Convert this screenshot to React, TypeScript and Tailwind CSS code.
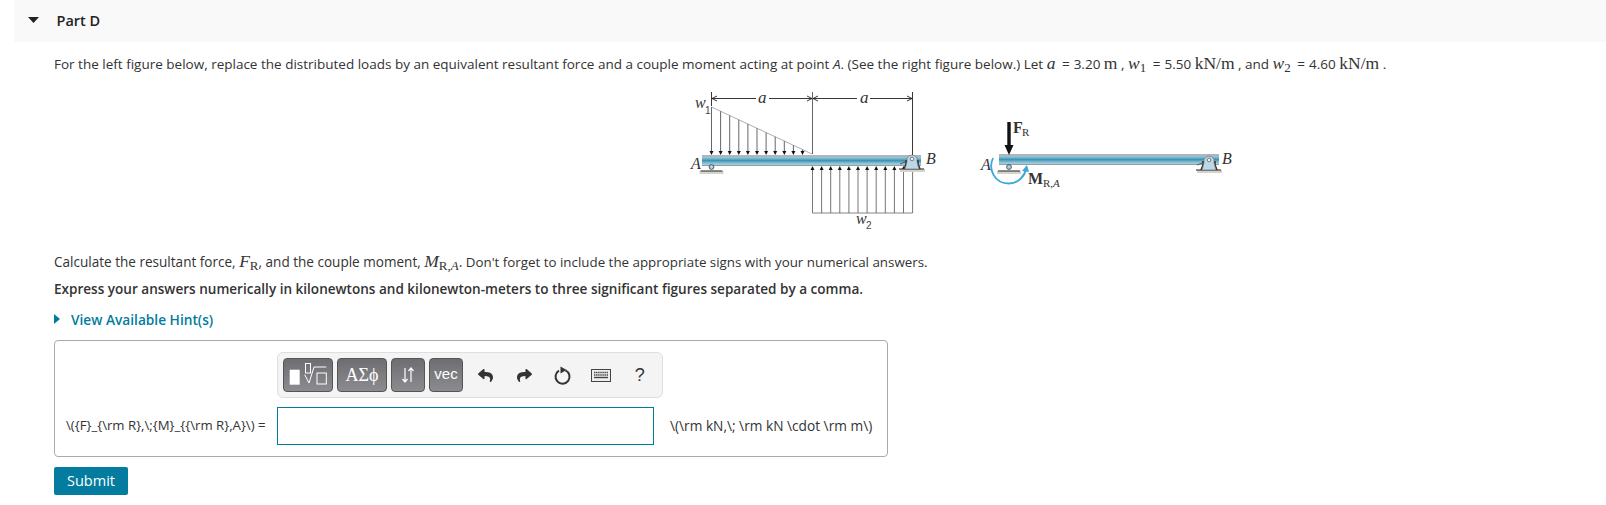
import { FaReply, FaShare } from 'react-icons/fa';

const serif = '"Liberation Serif", serif';

function M({ children }: { children: React.ReactNode }) {
  return <span className="font-['Liberation_Serif',serif] italic text-[17.5px] text-[#333]">{children}</span>;
}

function R({ children }: { children: React.ReactNode }) {
  return <span className="font-['Liberation_Serif',serif] text-[17.5px] text-[#333]">{children}</span>;
}

function Eq({ children }: { children: React.ReactNode }) {
  return <span className="ml-[3px] mr-[0.5px]">{children}</span>;
}

function Sub({ children }: { children: React.ReactNode }) {
  return (
    <sub className="font-['Liberation_Serif',serif] text-[13px] text-[#333] not-italic leading-none">
      {children}
    </sub>
  );
}

function Support({ x, y }: { x: number; y: number }) {
  // pin support at the right end of a beam
  return (
    <g>
      <rect x={x - 12} y={y + 10} width={25} height={3} fill="#d4d4ca" />
      <line x1={x - 13} y1={y + 10} x2={x + 12} y2={y + 10} stroke="#333" strokeWidth="1.1" />
      <path d={`M${x - 12} ${y + 5} L${x - 7} ${y + 3}`} stroke="#444" strokeWidth="0.8" fill="none" />
      <path d={`M${x - 8} ${y + 10} L${x - 6} ${y + 5} L${x - 6} ${y + 1}`} stroke="#333" strokeWidth="1.6" fill="none" />
      <path d={`M${x + 8} ${y + 10} L${x + 6} ${y + 5} L${x + 6} ${y + 1}`} stroke="#333" strokeWidth="1.6" fill="none" />
      <path
        d={`M${x - 7} ${y + 10} L${x - 5} ${y + 3} L${x - 5} ${y - 1} Q${x} ${y - 7} ${x + 5} ${y - 1} L${x + 5} ${y + 3} L${x + 7} ${y + 10} Z`}
        fill="#bcd7e6"
        stroke="#666"
        strokeWidth="0.6"
      />
      <circle cx={x} cy={y} r="1.8" fill="#eef3f6" stroke="#555" strokeWidth="0.7" />
    </g>
  );
}

function Roller({ x, y }: { x: number; y: number }) {
  return (
    <g>
      <rect x={x - 12} y={y + 4} width={24} height={3} fill="#d4d4ca" />
      <line x1={x - 11} y1={y + 4} x2={x + 11} y2={y + 4} stroke="#333" strokeWidth="1.1" />
      <circle cx={x} cy={y} r="2.4" fill="#a9d4e6" stroke="#333" strokeWidth="0.8" />
    </g>
  );
}

function Beam({ x, y, w, id }: { x: number; y: number; w: number; id: string }) {
  return (
    <g>
      <defs>
        <linearGradient id={id} x1="0" y1="0" x2="0" y2="1">
          <stop offset="0" stopColor="#b4b4b4" />
          <stop offset="0.16" stopColor="#a9b9c0" />
          <stop offset="0.25" stopColor="#8cc4da" />
          <stop offset="0.5" stopColor="#3f94b5" />
          <stop offset="0.85" stopColor="#a5d0e0" />
          <stop offset="1" stopColor="#8a8a8a" />
        </linearGradient>
      </defs>
      <rect x={x} y={y} width={w} height={11} fill={`url(#${id})`} />
    </g>
  );
}

function LeftFigure() {
  const down = Array.from({ length: 11 }, (_, i) => 711.5 + i * 9.1);
  const up = Array.from({ length: 12 }, (_, i) => 812.5 + i * 9.1);
  return (
    <svg width="290" height="160" viewBox="660 80 290 160" className="shrink-0">
      <Beam x={702} y={155} w={219} id="beamL" />
      {/* dimension lines */}
      <g stroke="#222" strokeWidth="0.9" fill="none">
        <line x1="711.5" y1="92" x2="711.5" y2="106" />
        <line x1="812.5" y1="92" x2="812.5" y2="154" stroke="#555" />
        <line x1="912.5" y1="92" x2="912.5" y2="155" />
        <line x1="712" y1="98.5" x2="756" y2="98.5" />
        <line x1="769" y1="98.5" x2="812" y2="98.5" />
        <line x1="813" y1="98.5" x2="857" y2="98.5" />
        <line x1="870" y1="98.5" x2="912" y2="98.5" />
        <path d="M717 96 L712 98.5 L717 101" />
        <path d="M807 96 L812 98.5 L807 101" />
        <path d="M818 96 L813 98.5 L818 101" />
        <path d="M907 96 L912 98.5 L907 101" />
      </g>
      <line x1="711.5" y1="107" x2="812" y2="154" stroke="#999" strokeWidth="0.8" />
      {/* w1 load */}
      {down.map((x) => {
        const top = 107 + ((x - 711.5) / 100.5) * 47;
        return (
          <g key={x}>
            <line x1={x} y1={top} x2={x} y2={152} stroke="#555" strokeWidth="0.9" />
            <path d={`M${x - 2} 151 L${x + 2} 151 L${x} 155 Z`} fill="#111" />
          </g>
        );
      })}
      {/* w2 load */}
      <line x1="812.5" y1="213" x2="912.5" y2="213" stroke="#777" strokeWidth="0.9" />
      {up.map((x) => (
        <g key={x}>
          <line x1={x} y1={213} x2={x} y2={169} stroke="#666" strokeWidth="0.9" />
          <path d={`M${x - 2} 170 L${x + 2} 170 L${x} 166 Z`} fill="#111" />
        </g>
      ))}
      <Roller x={711.5} y={167} />
      <Support x={912} y={159} />
      <g fontFamily={serif} fontStyle="italic" fill="#333">
        <text x="758" y="103" fontSize="17">a</text>
        <text x="860" y="103" fontSize="17">a</text>
        <text x="695" y="108" fontSize="16">w</text>
        <text x="691" y="169" fontSize="16">A</text>
        <text x="926" y="164" fontSize="16">B</text>
        <text x="856" y="224" fontSize="16">w</text>
      </g>
      <g fontFamily='"Liberation Sans", sans-serif' fill="#444" fontSize="10">
        <text x="705" y="114">1</text>
        <text x="866" y="229">2</text>
      </g>
    </svg>
  );
}

function RightFigure() {
  return (
    <svg width="280" height="160" viewBox="960 80 280 160" className="shrink-0">
      <Beam x={999} y={154} w={220} id="beamR" />
      <Roller x={1009} y={167} />
      <Support x={1209} y={160} />
      <line x1="1009" y1="122" x2="1009" y2="147" stroke="#111" strokeWidth="3.4" />
      <path d="M1004.5 145 L1013.5 145 L1009 155 Z" fill="#111" />
      <path d="M993 158 C988 169 994 183.5 1009 183.5 C1019 183.5 1025 175 1026 169" fill="none" stroke="#3aa8d8" strokeWidth="1.8" />
      <path d="M1022 171 L1027 165 L1029 172 Z" fill="#3aa8d8" />
      <g fontFamily={serif} fill="#333">
        <text x="1013" y="133" fontSize="16" fontWeight="700">F</text>
        <text x="1022" y="136" fontSize="11">R</text>
        <text x="981" y="170" fontSize="16" fontStyle="italic">A</text>
        <text x="1222" y="164" fontSize="16" fontStyle="italic">B</text>
        <text x="1028" y="184" fontSize="16" fontWeight="700">M</text>
        <text x="1043" y="187" fontSize="11">R,<tspan fontStyle="italic">A</tspan></text>
      </g>
    </svg>
  );
}

function ToolButton({ w, children }: { w: string; children: React.ReactNode }) {
  return (
    <div className={`${w} h-[34px] flex items-center justify-center rounded-[4px] border border-[#555] bg-linear-to-b from-[#6e6e72] to-[#8c8c90] text-white`}>
      {children}
    </div>
  );
}

function IconSlot({ children }: { children: React.ReactNode }) {
  return <div className="w-[38.5px] flex items-center justify-center text-[#333]">{children}</div>;
}

function Toolbar() {
  return (
    <div className="ml-[222px] w-[386px] h-[46px] flex items-center pl-[5px] rounded-[6px] border border-[#dedede] bg-[#f4f4f4]">
      <div className="flex gap-[4px]">
        <ToolButton w="w-[50px]">
          <svg width="38" height="26" viewBox="0 0 38 26" fill="none" stroke="#fff">
            <rect x="0.7" y="7.7" width="10" height="15" fill="#fff" stroke="none" />
            <rect x="16.5" y="1.5" width="5" height="9.5" strokeWidth="1" />
            <path d="M15.7 12.7 L20 21 L25 5 H37.3" strokeWidth="1" />
            <rect x="28" y="11" width="9.3" height="11" strokeWidth="1" />
          </svg>
        </ToolButton>
        <ToolButton w="w-[50px]">
          <span className="font-['Liberation_Serif',serif] text-[18px] leading-none">ΑΣϕ</span>
        </ToolButton>
        <ToolButton w="w-[34px]">
          <svg width="14" height="16" viewBox="0 0 14 16" fill="none" stroke="#fff" strokeWidth="1.2">
            <path d="M4 1 V15 M1.5 12 L4 15 L6.5 12" />
            <path d="M10 15 V1 M7.5 4 L10 1 L12.5 4" />
          </svg>
        </ToolButton>
        <ToolButton w="w-[34px]">
          <span className="font-['Liberation_Sans',sans-serif] text-[15px] leading-none mb-[3px]">vec</span>
        </ToolButton>
      </div>
      <div className="flex items-center ml-[3.5px]">
        <IconSlot><FaReply size={15} /></IconSlot>
        <IconSlot><FaShare size={15} /></IconSlot>
        <IconSlot>
          <svg width="18" height="19" viewBox="0 0 18 19" fill="none">
            <path d="M11.5 4.3 A7 7 0 1 1 5 4.6" stroke="#333" strokeWidth="2" />
            <path d="M6.5 0.5 L12.5 4 L6.5 7.5 Z" fill="#333" />
          </svg>
        </IconSlot>
        <IconSlot>
          <svg width="20" height="13" viewBox="0 0 20 13" fill="none">
            <rect x="0.5" y="0.5" width="19" height="12" fill="#eee" stroke="#444" />
            <path d="M3 3.5 H17 M3 6 H17" stroke="#444" strokeWidth="1.4" strokeDasharray="1.4 0.7" />
            <path d="M3 8.5 H17" stroke="#444" strokeWidth="1.4" />
          </svg>
        </IconSlot>
        <IconSlot>
          <span className="font-['Liberation_Sans',sans-serif] text-[18px] leading-none">?</span>
        </IconSlot>
      </div>
    </div>
  );
}

export default function App() {
  return (
    <div className="w-[1606px] h-[505px] bg-white overflow-hidden font-['Open_Sans',sans-serif] text-[13.55px] text-[#333]">
      {/* Part header */}
      <div className="ml-[14px] h-[42px] bg-[#f9f9f9] flex items-center">
        <svg width="12" height="6" viewBox="0 0 12 6" className="ml-[14px] mb-[2px]">
          <path d="M0 0 H11 L5.5 6 Z" fill="#222" />
        </svg>
        <span className="ml-[16.5px] mb-[1px] text-[14.5px] font-semibold text-[#222]">Part D</span>
      </div>

      <div className="pl-[54px]">
        <p className="mt-[10px] h-[22px] leading-[22px] text-[13.5px] whitespace-nowrap">
          For the left figure below, replace the distributed loads by an equivalent resultant force and a couple moment acting at point <i>A</i>. (See the right figure below.) Let <M>a</M> <Eq>=</Eq> 3.20 <R>m</R> , <M>w</M><Sub>1</Sub> <Eq>=</Eq> 5.50 <R>kN/m</R> , and <M>w</M><Sub>2</Sub> <Eq>=</Eq> 4.60 <R>kN/m</R> .
        </p>

        <div className="ml-[606px] mt-[6px] h-[160px] flex gap-[10px]">
          <LeftFigure />
          <RightFigure />
        </div>

        <p className="mt-[10px] h-[22px] leading-[22px] whitespace-nowrap">
          Calculate the resultant force, <M>F</M><Sub>R</Sub>, and the couple moment, <M>M</M><Sub>R,<i>A</i></Sub>. <span className="text-[13.35px]">Don't forget to include the appropriate signs with your numerical answers.</span>
        </p>
        <p className="mt-[6px] h-[22px] leading-[22px] font-semibold whitespace-nowrap">
          Express your answers numerically in kilonewtons and kilonewton-meters to three significant figures separated by a comma.
        </p>
        <div className="mt-[9px] h-[22px] flex items-center text-[13.7px] text-[#007c9e] font-semibold">
          <svg width="6" height="10" viewBox="0 0 6 10" className="mb-[3px]">
            <path d="M0 0 L6 5 L0 10 Z" fill="#007c9e" />
          </svg>
          <span className="ml-[11px]">View Available Hint(s)</span>
        </div>

        {/* Answer box */}
        <div className="mt-[9px] w-[834px] h-[117px] pt-[11px] border border-[#aaa] rounded-[4px]">
          <Toolbar />
          <div className="mt-[9px] flex items-center">
            <span className="ml-[11px] w-[211px] whitespace-nowrap text-[13.2px]">{'\\({F}_{\\rm R},\\;{M}_{{\\rm R},A}\\) ='}</span>
            <div className="w-[377px] h-[38px] border border-[#007c9e] bg-white" />
            <span className="ml-[16px] whitespace-nowrap text-[13.7px]">{'\\(\\rm kN,\\; \\rm kN \\cdot \\rm m\\)'}</span>
          </div>
        </div>

        <button className="mt-[10px] w-[74px] h-[28px] rounded-[2px] bg-[#037c9f] text-white text-[14.5px] flex items-center justify-center">
          Submit
        </button>
      </div>
    </div>
  );
}
